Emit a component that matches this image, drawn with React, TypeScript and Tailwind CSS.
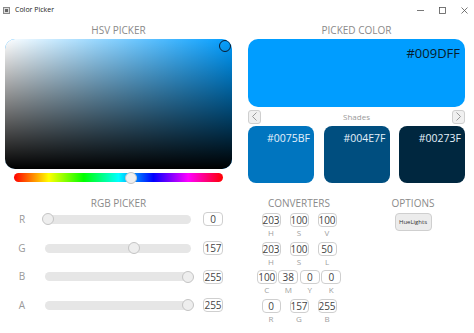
import React from 'react';

const Box = ({ v, w = 'w-[19px]' }: { v: string; w?: string }) => (
  <div className={`${w} h-[14px] border border-[#cfcfcf] rounded-[4px] bg-white flex items-center justify-center text-[10px] leading-none text-[#444]`}>
    {v}
  </div>
);

const ConvRow = ({ cells, cell }: { cells: [string, string][]; cell: string }) => (
  <div className="h-[28.7px] flex justify-center">
    {cells.map(([v, l], i) => (
      <div key={i} className={`${cell} flex flex-col items-center`}>
        <Box v={v} w={cells.length === 4 ? 'w-[20px]' : 'w-[19px]'} />
        <div className="text-[8px] leading-[10px] mt-[1px] text-[#a0a0a0]">{l}</div>
      </div>
    ))}
  </div>
);

const Slider = ({ label, value }: { label: string; value: number }) => (
  <div className="h-[28.7px] flex items-center">
    <div className="w-[34px] text-center text-[10px] text-[#999]">{label}</div>
    <div className="ml-[6px] w-[146px] h-[9px] rounded-full bg-[#e6e6e6] relative">
      <div
        className="absolute top-1/2 w-[12px] h-[12px] -mt-[6px] -ml-[6px] rounded-full bg-[#eeeeee] border border-[#c4c4c4]"
        style={{ left: `${3 + (value / 255) * 140}px` }}
      />
    </div>
    <div className="ml-[12px]">
      <Box v={String(value)} w="w-[20px]" />
    </div>
  </div>
);

const Arrow = ({ dir }: { dir: 'l' | 'r' }) => (
  <div className="w-[13px] h-[14px] rounded-[3px] border border-[#cfcfcf] bg-[#f0f0f0] flex items-center justify-center">
    <svg width="7" height="9" viewBox="0 0 7 9">
      <path d={dir === 'l' ? 'M5.5 0.5 L1.5 4.5 L5.5 8.5' : 'M1.5 0.5 L5.5 4.5 L1.5 8.5'} stroke="#9a9a9a" strokeWidth="1" fill="none" />
    </svg>
  </div>
);

export default function App() {
  const shades = [
    { bg: 'bg-[#0075BF]', t: '#0075BF' },
    { bg: 'bg-[#004E7F]', t: '#004E7F' },
    { bg: 'bg-[#00273F]', t: '#00273F' },
  ];

  return (
    <div className="w-[474px] h-[333px] bg-white overflow-hidden font-['Open_Sans','Noto_Sans',sans-serif] text-[#888]">
      {/* title bar */}
      <div className="h-[20px] flex items-center pl-[3px] pr-[6px]">
        <div className="w-[7px] h-[7px] border border-[#888] bg-[#ddd] flex items-center justify-center">
          <div className="w-[3px] h-[3px] bg-[#666]" />
        </div>
        <div className="ml-[5px] text-[7px] text-[#222]">Color Picker</div>
        <div className="ml-auto flex items-center gap-[15px]">
          <svg width="7" height="7" viewBox="0 0 7 7"><path d="M0 3.5 H7" stroke="#555" strokeWidth="0.8" /></svg>
          <svg width="7" height="7" viewBox="0 0 7 7"><rect x="0.5" y="0.5" width="6" height="6" stroke="#555" strokeWidth="0.8" fill="none" /></svg>
          <svg width="7" height="7" viewBox="0 0 7 7"><path d="M0.5 0.5 L6.5 6.5 M6.5 0.5 L0.5 6.5" stroke="#555" strokeWidth="0.8" /></svg>
        </div>
      </div>

      {/* top section */}
      <div className="flex pl-[5px] pt-[2px]">
        <div className="w-[227px]">
          <div className="h-[17px] flex items-center justify-center text-[10px] text-[#8a8a8a]">HSV PICKER</div>
          <div className="h-[130px] rounded-[10px] bg-[#009DFF] relative overflow-hidden">
            <div className="absolute inset-0 bg-gradient-to-r from-white to-transparent" />
            <div className="absolute inset-0 bg-gradient-to-b from-transparent to-black" />
            <div className="absolute right-[1px] top-[1px] w-[12px] h-[12px] rounded-full border-[1.5px] border-[#0a1a2e]" />
          </div>
          <div className="mt-[4px] mx-[9px] h-[9px] rounded-full relative bg-[linear-gradient(to_right,#ff0000,#ffff00,#00ff00,#00ffff,#0000ff,#ff00ff,#ff0000)]">
            <div className="absolute left-[111px] top-1/2 -mt-[6px] w-[12px] h-[12px] rounded-full bg-[#eeeeee] border border-[#c4c4c4]" />
          </div>
        </div>

        <div className="w-[217px] ml-[16px]">
          <div className="h-[17px] flex items-center justify-center text-[10px] text-[#8a8a8a]">PICKED COLOR</div>
          <div className="h-[68px] rounded-[10px] bg-[#009DFF] flex justify-end pt-[7px] pr-[5px]">
            <span className="text-[13px] leading-[15px] text-[#071c2c]">#009DFF</span>
          </div>
          <div className="h-[19px] flex items-center justify-between">
            <Arrow dir="l" />
            <span className="text-[8px] text-[#999]">Shades</span>
            <Arrow dir="r" />
          </div>
          <div className="flex justify-between">
            {shades.map((s) => (
              <div key={s.t} className={`w-[66px] h-[57px] rounded-[8px] ${s.bg} flex justify-end pt-[6px] pr-[4px]`}>
                <span className="text-[10.5px] leading-[12px] text-[#e4f1fb]">{s.t}</span>
              </div>
            ))}
          </div>
        </div>
      </div>

      {/* bottom section */}
      <div className="flex pl-[5px] mt-[13px]">
        <div className="w-[227px]">
          <div className="h-[14px] flex items-center justify-center text-[10px] text-[#8a8a8a]">RGB PICKER</div>
          <div className="-mt-[5px]">
            <Slider label="R" value={0} />
            <Slider label="G" value={157} />
            <Slider label="B" value={255} />
            <Slider label="A" value={255} />
          </div>
        </div>

        <div className="w-[102px] ml-[16px]">
          <div className="h-[14px] flex items-center justify-center text-[10px] text-[#8a8a8a]">CONVERTERS</div>
          <div className="pt-[3px]">
            <ConvRow cell="w-[28px]" cells={[['203', 'H'], ['100', 'S'], ['100', 'V']]} />
            <ConvRow cell="w-[28px]" cells={[['203', 'H'], ['100', 'S'], ['50', 'L']]} />
            <ConvRow cell="w-[21.5px]" cells={[['100', 'C'], ['38', 'M'], ['0', 'Y'], ['0', 'K']]} />
            <ConvRow cell="w-[28px]" cells={[['0', 'R'], ['157', 'G'], ['255', 'B']]} />
          </div>
        </div>

        <div className="w-[74px] ml-[26px]">
          <div className="h-[14px] flex items-center justify-center text-[10px] text-[#8a8a8a]">OPTIONS</div>
          <div className="flex justify-center pt-[3px]">
            <div className="w-[37px] h-[18px] rounded-[4px] border border-[#cfcfcf] bg-[#ececec] flex items-center justify-center text-[6px] text-[#333]">
              HueLights
            </div>
          </div>
        </div>
      </div>
    </div>
  );
}
